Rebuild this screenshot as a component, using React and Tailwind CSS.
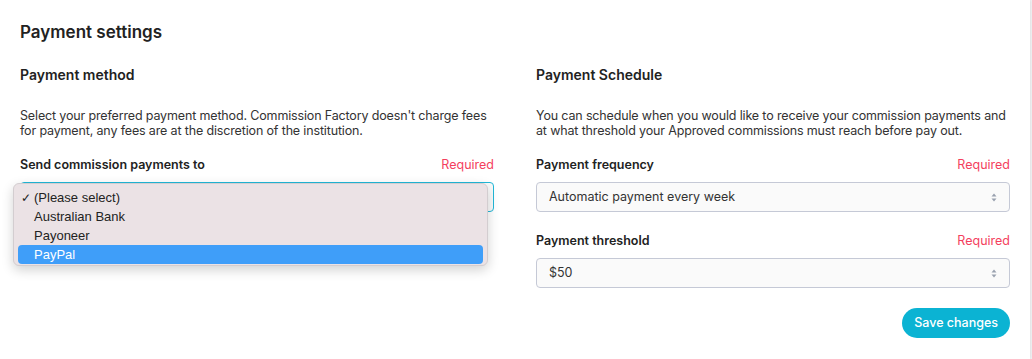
import { useState } from 'react';

function Chevrons() {
  return (
    <svg className="w-[6px] h-[9px] text-gray-400" viewBox="0 0 6 9" fill="currentColor">
      <path d="M3 0.5L5.5 3.5H0.5Z" />
      <path d="M3 8.5L0.5 5.5H5.5Z" />
    </svg>
  );
}

function Field({ label, children }) {
  return (
    <div>
      <div className="flex justify-between items-center h-[18px] text-[12.5px]">
        <span className="font-semibold text-[#222]">{label}</span>
        <span className="text-[#f43f5e]">Required</span>
      </div>
      <div className="mt-[8px]">{children}</div>
    </div>
  );
}

function SelectBox({ value, focused }) {
  return (
    <div
      className={`flex items-center justify-between h-[30px] px-3 rounded-[4px] border bg-[#fafafa] text-[12.5px] text-[#333] ${
        focused ? 'border-[#22b8d8]' : 'border-[#c5c9d6]'
      }`}
    >
      <span>{value}</span>
      <Chevrons />
    </div>
  );
}

export default function App() {
  const [options] = useState(['(Please select)', 'Australian Bank', 'Payoneer', 'PayPal']);

  return (
    <div className="w-[1032px] h-[359px] bg-[#f1f1f3] overflow-hidden" style={{ fontFamily: 'Inter, "Noto Sans", sans-serif' }}>
      <div className="relative w-[1030px] h-[359px] bg-white shadow-[0_0_3px_rgba(0,0,0,0.12)] px-5 pt-[20px]">
        <h1 className="text-[17px] leading-[24px] font-semibold text-[#222]">Payment settings</h1>

        <div className="grid grid-cols-2 gap-[42px] mt-[21px] w-[990px]">
          {/* Payment method */}
          <div>
            <h2 className="text-[14px] leading-[20px] font-semibold text-[#222]">Payment method</h2>
            <p className="mt-[23px] text-[12.5px] leading-[15px] tracking-[-0.15px] text-[#333]">
              Select your preferred payment method. Commission Factory doesn't charge fees for payment, any fees are at the discretion of the institution.
            </p>
            <div className="mt-[18px]">
              <Field label="Send commission payments to">
                <SelectBox value="(Please select)" focused />
              </Field>
            </div>
          </div>

          {/* Payment schedule */}
          <div>
            <h2 className="text-[14px] leading-[20px] font-semibold text-[#222]">Payment Schedule</h2>
            <p className="mt-[23px] text-[12.5px] leading-[15px] tracking-[-0.15px] text-[#333]">
              You can schedule when you would like to receive your commission payments and at what threshold your Approved commissions must reach before pay out.
            </p>
            <div className="mt-[18px]">
              <Field label="Payment frequency">
                <SelectBox value="Automatic payment every week" />
              </Field>
            </div>
            <div className="mt-[20px]">
              <Field label="Payment threshold">
                <SelectBox value="$50" />
              </Field>
            </div>
            <div className="flex justify-end mt-[20px]">
              <button className="h-[30px] px-3 rounded-full bg-[#0bb3d3] text-white text-[12.5px] font-medium">Save changes</button>
            </div>
          </div>
        </div>

        {/* open native select menu */}
        <div
          className="absolute left-[13px] top-[183px] w-[475px] h-[83px] rounded-[6px] bg-[#ebe2e5] border border-[#d3cdd0] shadow-[0_4px_12px_rgba(0,0,0,0.18)] px-[4px] py-[4px] text-[13px] text-[#222]"
          style={{ fontFamily: '"Liberation Sans", Arial, sans-serif' }}
        >
          {options.map((o, i) => (
            <div
              key={o}
              className={`flex items-center h-[19px] rounded-[4px] ${i === 3 ? 'bg-[#3f9ef9] text-white' : ''}`}
            >
              <span className="w-[16px] pl-[3px] text-[12px]">{i === 0 ? '✓' : ''}</span>
              <span>{o}</span>
            </div>
          ))}
        </div>
      </div>
    </div>
  );
}
